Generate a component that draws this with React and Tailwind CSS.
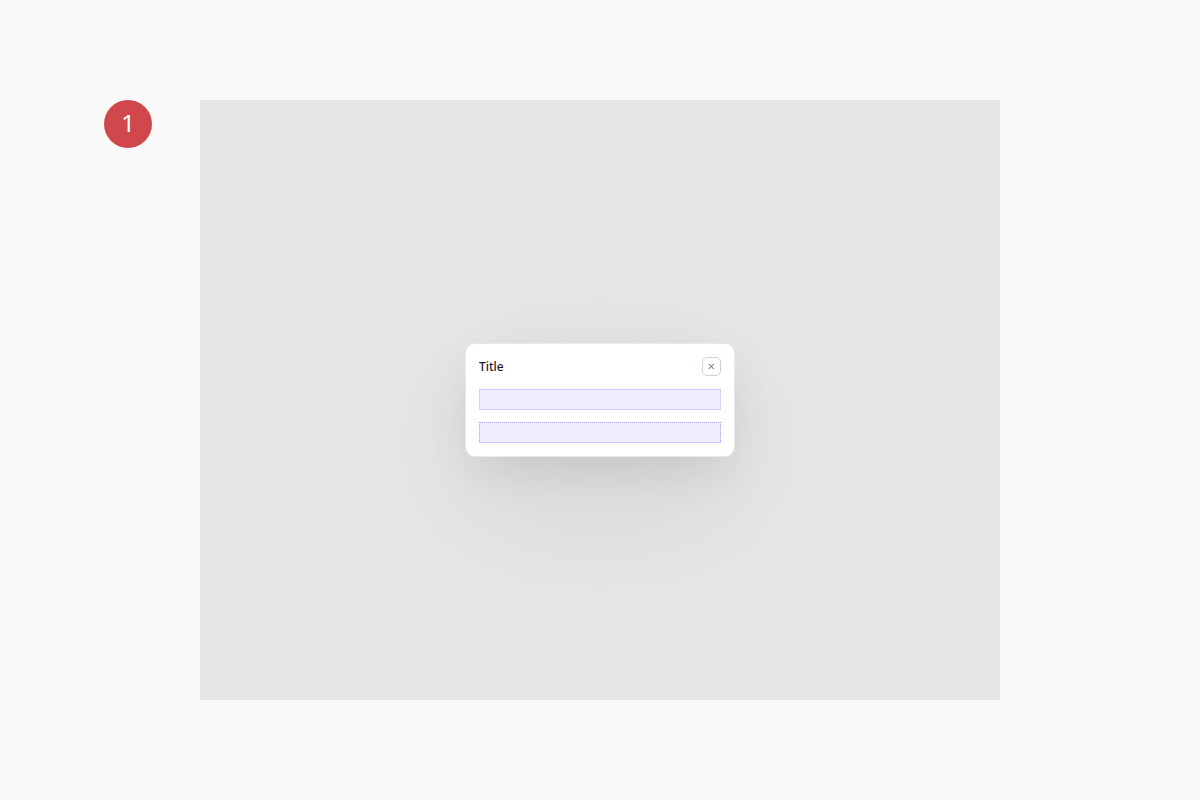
import { clsx } from "clsx";

const slots = [
  { id: "body", className: "mt-[13px] border-[#bbb7ef]" },
  { id: "footer", className: "mt-3 border-[#a5a0ec]" },
];

function StepBadge({ number }) {
  return (
    <div className="flex h-12 w-12 shrink-0 justify-center rounded-full bg-[#d0484c] font-['Noto_Sans',sans-serif] text-2xl leading-[46px] text-white">
      {number}
    </div>
  );
}

function CloseIcon() {
  return (
    <svg viewBox="0 0 7 7" className="h-[7px] w-[7px]" fill="none" stroke="currentColor" aria-hidden="true">
      <path d="M0.7 0.9 5.9 6.1M5.9 0.9 0.7 6.1" strokeWidth="0.9" />
    </svg>
  );
}

function Modal({ title }) {
  return (
    <section
      role="dialog"
      aria-labelledby="modal-title"
      className="w-[270px] rounded-[10px] border border-[#e9e9ea] bg-white p-[13px] shadow-[0_44px_150px_rgba(0,0,0,0.10),0_20px_50px_-10px_rgba(0,0,0,0.11)]"
    >
      <header className="flex items-center justify-between">
        <h2 id="modal-title" className="font-['Noto_Sans',sans-serif] text-xs leading-4 font-medium text-[#1c1b2e]">
          {title}
        </h2>
        <button
          type="button"
          aria-label="Close"
          className="flex h-[19px] w-[19px] items-center justify-center rounded-[5px] border border-[#d0cde3] bg-white text-[#4b4960]"
        >
          <CloseIcon />
        </button>
      </header>

      {slots.map((slot) => (
        <div key={slot.id} className={clsx("h-[21px] border border-dotted bg-[#efeefd]", slot.className)} />
      ))}
    </section>
  );
}

function App() {
  return (
    <main className="flex min-h-screen items-stretch gap-12 bg-[#fafafa] py-[100px] pr-[200px] pl-[104px]">
      <StepBadge number={1} />
      <div className="flex flex-1 items-center justify-center overflow-hidden bg-[#e7e7e7]">
        <Modal title="Title" />
      </div>
    </main>
  );
}

export default App;
